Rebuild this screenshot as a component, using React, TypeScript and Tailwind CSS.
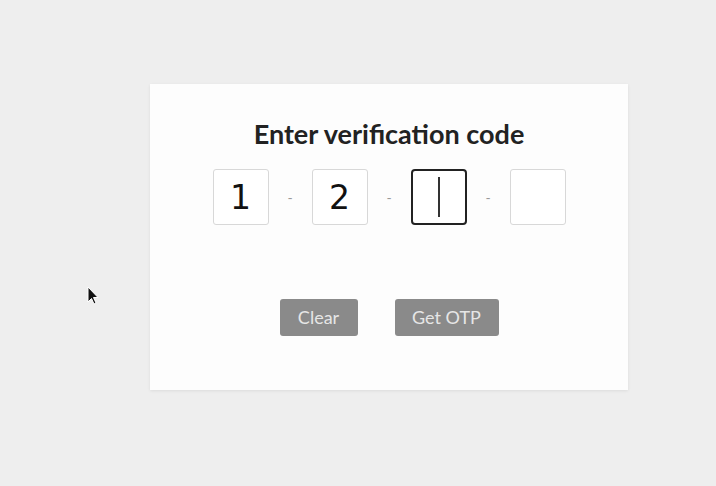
import React from "react"

const digits = ["1", "2", "", ""]

function Cursor() {
  return (
    <svg className="absolute left-[86px] top-[286px]" width="14" height="20" viewBox="0 0 14 20">
      <path d="M2 1 L2 16 L5.5 12.5 L8 18 L10 17 L7.5 11.5 L12 11.5 Z" fill="#111" stroke="#fff" strokeWidth="1" />
    </svg>
  )
}

export default function App() {
  return (
    <div className="relative h-[486px] w-[716px] bg-[#eeeeee] pl-[150px] pt-[84px] font-['Lato','Liberation_Sans',sans-serif]">
      <div className="flex h-[306px] w-[478px] flex-col items-center bg-[#fdfdfd] pt-[34px] shadow-[0_1px_3px_rgba(0,0,0,0.08)]">
        <h1 className="text-[27px] font-bold leading-[32px] text-[#222]">Enter verification code</h1>
        <div className="mt-[19px] flex items-center">
          {digits.map((d, i) => (
            <React.Fragment key={i}>
              {i > 0 && <span className="w-[43px] text-center text-[14px] text-[#999]">-</span>}
              <div
                className={
                  i === 2
                    ? "flex h-[56px] w-[56px] items-center justify-center rounded-[4px] border-2 border-[#222] bg-white"
                    : "flex h-[56px] w-[56px] items-center justify-center rounded-[3px] border border-[#d8d8d8] bg-white"
                }
              >
                {i === 2 ? (
                  <span className="h-[40px] w-[2px] bg-[#333]" />
                ) : (
                  <span className="font-['DejaVu_Sans',sans-serif] text-[33px] leading-none text-[#111]">{d}</span>
                )}
              </div>
            </React.Fragment>
          ))}
        </div>
        <div className="mt-[74px] flex gap-[37px]">
          <button className="h-[37px] w-[78px] rounded-[3px] bg-[#8a8a8a] text-[18px] text-[#e6e6e6]">Clear</button>
          <button className="h-[37px] w-[104px] rounded-[3px] bg-[#8a8a8a] text-[18px] text-[#e6e6e6]">Get OTP</button>
        </div>
      </div>
      <Cursor />
    </div>
  )
}
